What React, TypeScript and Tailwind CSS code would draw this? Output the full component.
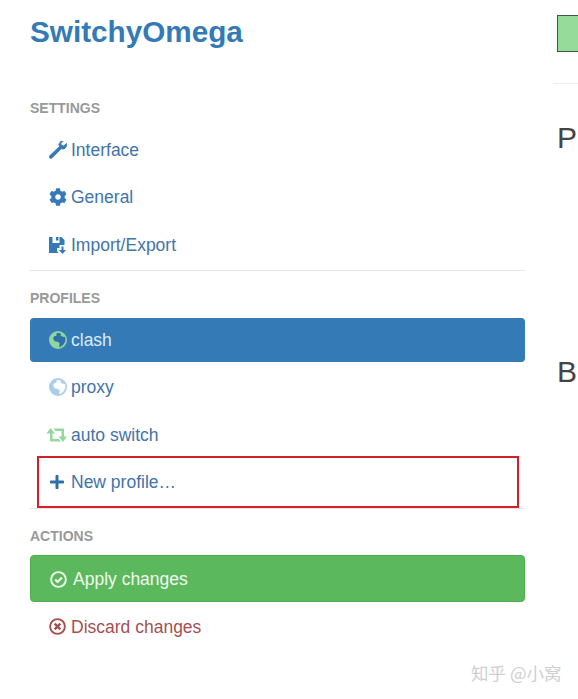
import React from 'react';
import { FaCog, FaPlus } from 'react-icons/fa';

type IconProps = { className?: string };

const Wrench: React.FC<IconProps> = ({ className }) => (
  <svg viewBox="0 0 18 18" className={className} fill="currentColor" stroke="currentColor" strokeWidth="0.900">
    <path d="M11.800 0.400 9.900 3.200l.6 2.400L1 14.400c-.9.900-.9 1.800-.3 2.500.7.700 1.700.6 2.500-.2l8.900-9 2.600.3c2-.8 3.300-3 2.900-5.500l-2.900 2.400-2.500-.6-.4-2.300 2.700-2.300c-.8-.3-1.800-.4-2.700-.3z" />
  </svg>
);

const FloppySave: React.FC<IconProps> = ({ className }) => (
  <svg viewBox="0 0 18 18" className={className} fill="currentColor">
    <path d="M0 1h3.500v6h7V1h2l3 3v5h-5v3H8v3l1.500 2H0z" />
    <path d="M7 1h2.500v3.500H7z" />
    <path d="M12.500 10.500h2v3.500h2.500L13.500 18 10 14h2.500z" />
  </svg>
);

const Globe: React.FC<IconProps & { land: string }> = ({ className, land }) => (
  <svg viewBox="0 0 18 18" className={className}>
    <circle cx="9" cy="9" r="9" fill="currentColor" />
    <path
      fill={land}
      d="M7.500 2.500c1.500-.7 3.500-.5 4.800.4l-.8 1.500 1.800 1.200 2.700.5c.6 1.600.6 3.400 0 5l-2 3-2.500 2-1.500-.5.800-3-2.200-1.800-3-.5-1.500-2.500 1-2.500 2.300-.5z"
    />
  </svg>
);

const Retweet: React.FC<IconProps> = ({ className }) => (
  <svg viewBox="0 0 22 18" className={className} fill="currentColor">
    <path d="M4.500 2 9 7.500H6.500V13H13l2 2.500H4V7.500H0.500z" />
    <path d="M7.500 2.500H18v8h3L17 16l-4.500-5.500h3V5H9.500z" />
  </svg>
);

const CircleCheck: React.FC<IconProps> = ({ className }) => (
  <svg viewBox="0 0 18 18" className={className} fill="none" stroke="currentColor">
    <circle cx="9" cy="9" r="7.800" strokeWidth="2" />
    <path d="M5.500 9l2.600 2.600 4.500-4.800" strokeWidth="2.400" />
  </svg>
);

const CircleX: React.FC<IconProps> = ({ className }) => (
  <svg viewBox="0 0 18 18" className={className} fill="none" stroke="currentColor">
    <circle cx="9" cy="9" r="7.800" strokeWidth="2" />
    <path d="M6 6l6 6M12 6l-6 6" strokeWidth="2.500" />
  </svg>
);

const NavRow: React.FC<{ icon: React.ReactNode; label: string; className?: string }> = ({ icon, label, className }) => (
  <div className={`h-[47.5px] flex items-center pl-[19px] text-[17.5px] ${className ?? 'text-[#4274a8]'}`}>
    <span className="w-[22px] flex items-center shrink-0">{icon}</span>
    <span>{label}</span>
  </div>
);

const SectionTitle: React.FC<{ children: React.ReactNode }> = ({ children }) => (
  <div className="text-[14px] leading-[20px] font-bold text-[#999999]">{children}</div>
);

export default function App() {
  return (
    <div className="relative h-[699px] w-[578px] overflow-hidden bg-white flex font-['Liberation_Sans',sans-serif]">
      {/* Sidebar */}
      <aside className="w-[525px] shrink-0 pl-[30px]">
        <h1 className="pt-[13px] text-[29.700px] leading-[38px] font-bold text-[#337ab7]">SwitchyOmega</h1>

        <div className="mt-[47px]">
          <SectionTitle>SETTINGS</SectionTitle>
        </div>
        <div className="mt-[8px]">
          <NavRow icon={<Wrench className="w-[18px] h-[18px] text-[#337ab7]" />} label="Interface" />
          <NavRow icon={<FaCog className="w-[18px] h-[18px] text-[#337ab7]" />} label="General" />
          <NavRow icon={<FloppySave className="w-[18px] h-[18px] text-[#337ab7]" />} label="Import/Export" />
        </div>
        <div className="border-t border-[#e5e5e5] mt-[1px]" />

        <div className="mt-[17px]">
          <SectionTitle>PROFILES</SectionTitle>
        </div>
        <div className="mt-[10px]">
          <div className="h-[44px] rounded-[4px] bg-[#337ab7] flex items-center pl-[19px] pt-[1px] text-[17.5px] text-[#dcebf5]">
            <span className="w-[22px] flex items-center shrink-0">
              <Globe land="#2f6fa8" className="w-[18px] h-[18px] text-[#8fd59c]" />
            </span>
            <span>clash</span>
          </div>
          <NavRow
            icon={<Globe land="#ffffff" className="w-[18px] h-[18px] text-[#a9cdea]" />}
            label="proxy"
            className="text-[#4274a8] mt-[2px]"
          />
          <NavRow icon={<Retweet className="w-[22px] h-[18px] -ml-[3px] text-[#93d89e]" />} label="auto switch" />
          <div className="relative">
            <NavRow icon={<FaPlus className="w-[16px] h-[16px] text-[#2f6fa8]" />} label="New profile…" />
            <div className="absolute left-[7px] top-[-3px] w-[482px] h-[52px] border-2 border-[#d3202c]" />
          </div>
        </div>
        <div className="border-t border-[#e5e5e5] mt-[2px]" />

        <div className="mt-[17px]">
          <SectionTitle>ACTIONS</SectionTitle>
        </div>
        <div className="mt-[9px]">
          <div className="h-[47px] rounded-[4px] bg-[#5cb85c] border border-[#4cae4c] flex items-center pl-[19px] pt-[1px] text-[17.5px] text-[#f1faf0]">
            <span className="w-[23px] flex items-center shrink-0">
              <CircleCheck className="w-[17px] h-[17px]" />
            </span>
            <span>Apply changes</span>
          </div>
          <NavRow icon={<CircleX className="w-[17px] h-[17px]" />} label="Discard changes" className="text-[#a5504f] mt-[1px]" />
        </div>
      </aside>

      {/* Main panel, cut off by the right edge */}
      <main className="flex-1 pl-[32px] overflow-hidden">
        <div className="mt-[15px] w-[60px] h-[37px] bg-[#97db9a] border border-[#3c5a40]" />
        <div className="mt-[31px] -ml-[4px] w-[60px] border-t border-[#eeeeee]" />
        <div className="mt-[36px] text-[30px] leading-[36px] text-[#444444]">P</div>
        <div className="mt-[198px] text-[30px] leading-[36px] text-[#444444]">B</div>
      </main>

      {/* Site watermark */}
      <div className="absolute left-[471px] top-[663px] text-[17.500px] leading-[20px] text-[#cfcfcf] font-['Noto_Sans_CJK_SC',sans-serif] whitespace-nowrap">
        知乎 @小窝
      </div>
    </div>
  );
}
